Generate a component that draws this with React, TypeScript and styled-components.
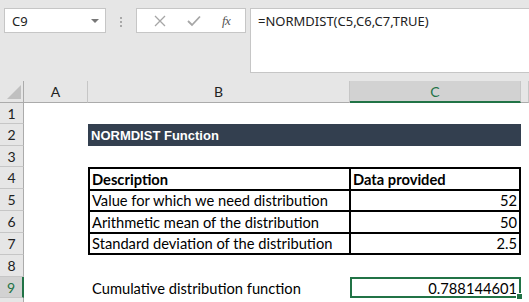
import React from 'react';
import styled, { createGlobalStyle, css } from 'styled-components';

const GlobalStyle = createGlobalStyle`
  html, body {
    margin: 0;
    padding: 0;
    background: #ffffff;
    overflow: hidden;
  }
`;

const Window = styled.div`
  width: 529px;
  height: 302px;
  background: #e6e6e6;
  overflow: hidden;
`;

// Formula bar strip
const Toolbar = styled.div`
  display: flex;
  align-items: flex-start;
  height: 81px;
  padding: 8px 0 0 4px;
  box-sizing: border-box;
`;

const NameBox = styled.div`
  display: flex;
  align-items: center;
  justify-content: space-between;
  width: 102px;
  height: 25px;
  box-sizing: border-box;
  background: #ffffff;
  border: 1px solid #c6c6c6;
  padding: 0 6px 0 7px;
  font-family: 'Noto Sans', 'Open Sans', sans-serif;
  font-size: 13px;
  color: #222;
`;

const DropArrow = styled.span`
  width: 0;
  height: 0;
  border-left: 4px solid transparent;
  border-right: 4px solid transparent;
  border-top: 4px solid #777;
`;

const Dots = styled.div`
  display: flex;
  flex-direction: column;
  gap: 2px;
  margin: 9px 14px 0 14px;
  span {
    width: 2px;
    height: 2px;
    background: #a8a8a8;
  }
`;

const ButtonBox = styled.div`
  display: flex;
  align-items: center;
  justify-content: space-around;
  width: 110px;
  height: 25px;
  box-sizing: border-box;
  background: #ffffff;
  border: 1px solid #c6c6c6;
  padding: 0 4px 0 6px;
`;

const FxLabel = styled.span`
  font-family: 'Liberation Serif', serif;
  font-style: italic;
  font-size: 13px;
  color: #555;
  letter-spacing: -0.5px;
`;

const FormulaInput = styled.div`
  flex: 1;
  height: 65px;
  margin-left: 4px;
  box-sizing: border-box;
  background: #ffffff;
  border: 1px solid #c6c6c6;
  border-right: none;
  padding: 3px 0 0 7px;
  font-family: 'Noto Sans', 'Open Sans', sans-serif;
  font-size: 13px;
  color: #222;
`;

// Worksheet grid
const Sheet = styled.div`
  display: grid;
  grid-template-columns: 24px 64px 262px 171px 1fr;
  grid-template-rows: 22px 21px 22px 21px 22px 22px 22px 22px 22px 21px 10px;
  background: #ffffff;
`;

const headerBase = css`
  display: flex;
  align-items: center;
  justify-content: center;
  box-sizing: border-box;
  background: #e6e6e6;
  font-family: 'Lato', 'Open Sans', sans-serif;
  font-size: 14px;
  color: #222;
`;

const Corner = styled.div`
  ${headerBase};
  position: relative;
  border-right: 1px solid #ababab;
  border-bottom: 1px solid #ababab;
  &::after {
    content: '';
    position: absolute;
    right: 2px;
    bottom: 3px;
    width: 0;
    height: 0;
    border-left: 14px solid transparent;
    border-bottom: 14px solid #c0c0c0;
  }
`;

const ColHeader = styled.div<{ $selected?: boolean }>`
  ${headerBase};
  border-right: 1px solid #c6c6c6;
  border-bottom: 1px solid #ababab;
  ${p => p.$selected && css`
    background: #d2d2d2;
    color: #217346;
    border-bottom: 2px solid #217346;
  `}
`;

const RowHeader = styled.div<{ $selected?: boolean }>`
  ${headerBase};
  border-right: 1px solid #ababab;
  border-bottom: 1px solid #c6c6c6;
  ${p => p.$selected && css`
    background: #d2d2d2;
    color: #217346;
    border-right: 2px solid #217346;
  `}
`;

const TitleCell = styled.div`
  grid-column: 3 / 5;
  display: flex;
  align-items: center;
  padding-left: 3px;
  background: #333f4f;
  color: #ffffff;
  font-family: 'Liberation Sans', Arial, sans-serif;
  font-weight: bold;
  font-size: 13px;
`;

const DataTable = styled.div`
  grid-column: 3 / 5;
  grid-row: 5 / 9;
  display: grid;
  grid-template-columns: 259px 1fr;
  grid-template-rows: repeat(4, 1fr);
  gap: 2px;
  padding: 2px;
  background: #000000;
`;

const Cell = styled.div<{ $bold?: boolean; $num?: boolean }>`
  display: flex;
  align-items: center;
  justify-content: ${p => (p.$num ? 'flex-end' : 'flex-start')};
  padding: 0 2px 0 2px;
  background: #ffffff;
  font-family: 'Lato', 'Open Sans', sans-serif;
  font-size: 14.7px;
  font-weight: ${p => (p.$bold ? 700 : 400)};
  color: #000;
  white-space: nowrap;
`;

const PlainCell = styled(Cell)`
  background: transparent;
  padding-left: 4px;
`;

const ActiveCell = styled(Cell)`
  position: relative;
  border: 2px solid #217346;
  padding-right: 2px;
  &::after {
    content: '';
    position: absolute;
    right: -4px;
    bottom: -4px;
    width: 5px;
    height: 5px;
    background: #217346;
    border: 1px solid #ffffff;
  }
`;

const Blank = styled.div``;

const rows = [
  { label: 'Value for which we need distribution', value: '52' },
  { label: 'Arithmetic mean of the distribution', value: '50' },
  { label: 'Standard deviation of the distribution', value: '2.5' },
];

export default function App() {
  return (
    <Window>
      <GlobalStyle />
      <Toolbar>
        <NameBox>
          C9
          <DropArrow />
        </NameBox>
        <Dots>
          <span />
          <span />
          <span />
        </Dots>
        <ButtonBox>
          <svg width="12" height="12" viewBox="0 0 12 12">
            <path d="M1 1 L11 11 M11 1 L1 11" stroke="#a6a6a6" strokeWidth="1.3" fill="none" />
          </svg>
          <svg width="14" height="12" viewBox="0 0 14 12">
            <path d="M1 6 L5 10 L13 1.5" stroke="#a6a6a6" strokeWidth="1.8" fill="none" />
          </svg>
          <FxLabel>fx</FxLabel>
        </ButtonBox>
        <FormulaInput>=NORMDIST(C5,C6,C7,TRUE)</FormulaInput>
      </Toolbar>

      <Sheet>
        <Corner />
        <ColHeader>A</ColHeader>
        <ColHeader>B</ColHeader>
        <ColHeader $selected>C</ColHeader>
        <ColHeader />

        <RowHeader>1</RowHeader>
        <Blank /><Blank /><Blank /><Blank />

        <RowHeader>2</RowHeader>
        <Blank />
        <TitleCell>NORMDIST Function</TitleCell>
        <Blank />

        <RowHeader>3</RowHeader>
        <Blank /><Blank /><Blank /><Blank />

        <RowHeader>4</RowHeader>
        <Blank />
        <DataTable>
          <Cell $bold>Description</Cell>
          <Cell $bold>Data provided</Cell>
          {rows.map(r => (
            <React.Fragment key={r.label}>
              <Cell>{r.label}</Cell>
              <Cell $num>{r.value}</Cell>
            </React.Fragment>
          ))}
        </DataTable>
        <Blank />

        <RowHeader>5</RowHeader>
        <Blank /><Blank />
        <RowHeader>6</RowHeader>
        <Blank /><Blank />
        <RowHeader>7</RowHeader>
        <Blank /><Blank />

        <RowHeader>8</RowHeader>
        <Blank /><Blank /><Blank /><Blank />

        <RowHeader $selected>9</RowHeader>
        <Blank />
        <PlainCell>Cumulative distribution function</PlainCell>
        <ActiveCell $num>0.788144601</ActiveCell>
        <Blank />

        <RowHeader />
      </Sheet>
    </Window>
  );
}
